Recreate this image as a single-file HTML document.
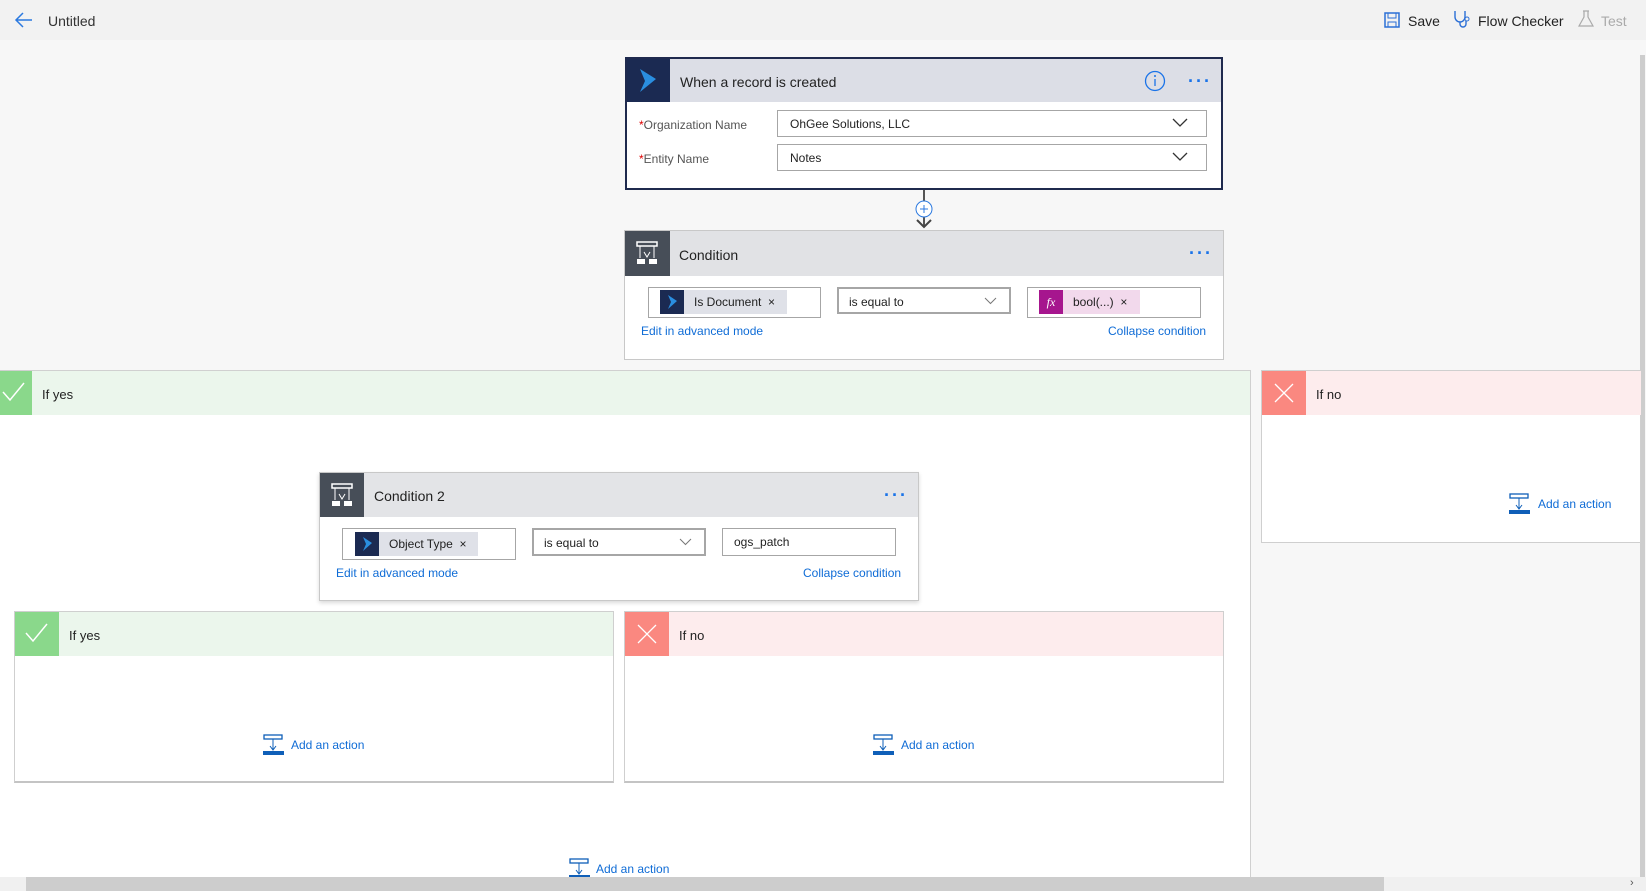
<!DOCTYPE html>
<html><head><meta charset="utf-8"><style>
*{box-sizing:border-box;margin:0;padding:0}
body{width:1646px;height:891px;overflow:hidden;background:#f7f7f7;font-family:"Liberation Sans",sans-serif;color:#222;position:relative}
.a{position:absolute}
.t{font-size:13px;white-space:nowrap}
.link{color:#0f6cd6;font-size:12px;white-space:nowrap}
.inp{position:absolute;background:#fff;border:1px solid #a6a6a6}
.chip{position:absolute;background:#dfe1e8;height:24px;font-size:12px;line-height:24px;padding-left:34px;white-space:nowrap}
.chip .ic{position:absolute;left:0;top:0;width:24px;height:24px;background:#1b2a52}
.dots{position:absolute;color:#1a73e8;font-size:18px;letter-spacing:2px;font-weight:bold}
</style></head><body>
<div class="a" style="left:0;top:0;width:1646px;height:40px;background:#f2f2f2"></div>
<svg class="a" style="left:14px;top:11px" width="20" height="18"><path d="M18 9H3M9 2L2 9l7 7" stroke="#2b79e0" stroke-width="1.5" fill="none"/></svg>
<div class="a t" style="left:48px;top:13px;font-size:14px;color:#333">Untitled</div>
<svg class="a" style="left:1384px;top:12px" width="16" height="16"><rect x="1" y="1" width="14" height="14" fill="none" stroke="#2b6fd6" stroke-width="1.5"/><rect x="4" y="1" width="8" height="5" fill="none" stroke="#2b6fd6"/><rect x="4" y="10" width="8" height="5" fill="none" stroke="#2b6fd6"/></svg>
<div class="a t" style="left:1408px;top:13px;font-size:14px">Save</div>
<svg class="a" style="left:1453px;top:10px" width="18" height="18"><path d="M2 1v6a5 5 0 0 0 10 0V1M7 12v2a3 3 0 0 0 6 0v-3" stroke="#2b6fd6" stroke-width="1.4" fill="none"/><circle cx="14" cy="9" r="2" stroke="#2b6fd6" fill="none"/></svg>
<div class="a t" style="left:1478px;top:13px;font-size:14px">Flow Checker</div>
<svg class="a" style="left:1578px;top:10px" width="16" height="18"><path d="M5 1h6M6 1v6L1 16h14L10 7V1" stroke="#aaa" stroke-width="1.2" fill="none"/></svg>
<div class="a t" style="left:1601px;top:13px;font-size:14px;color:#aaa">Test</div>
<div class="a" style="left:1640px;top:55px;width:5px;height:822px;background:#cdcdcd"></div>

<div class="a" style="left:625px;top:57px;width:598px;height:133px;background:#fff;border:2px solid #1f2a4e"></div>
<div class="a" style="left:627px;top:59px;width:594px;height:43px;background:#dcdee6"></div>
<div class="a" style="left:627px;top:59px;width:43px;height:43px;background:#1b2a52"></div>
<svg class="a" style="left:638px;top:68px" width="20" height="26"><path d="M2 1l16 10-16 13 5-11z" fill="#2a8ee0"/></svg>
<div class="a t" style="left:680px;top:74px;font-size:14px">When a record is created</div>
<svg class="a" style="left:1144px;top:70px" width="22" height="22"><circle cx="11" cy="11" r="9.5" stroke="#1a73e8" stroke-width="1.3" fill="none"/><path d="M11 9v7" stroke="#1a73e8" stroke-width="1.3"/><circle cx="11" cy="6" r="1" fill="#1a73e8"/></svg>
<div class="dots" style="left:1188px;top:71px">···</div>
<div class="a t" style="left:639px;top:118px;font-size:12px;color:#555"><span style="color:#d00">*</span>Organization Name</div>
<div class="a t" style="left:639px;top:152px;font-size:12px;color:#555"><span style="color:#d00">*</span>Entity Name</div>
<div class="inp" style="left:777px;top:110px;width:430px;height:27px"><span class="a t" style="left:12px;top:6px;font-size:12px">OhGee Solutions, LLC</span><svg class="a" style="right:18px;top:7px" width="16" height="10"><path d="M1 1l7 7 7-7" stroke="#333" stroke-width="1.3" fill="none"/></svg></div>
<div class="inp" style="left:777px;top:144px;width:430px;height:27px"><span class="a t" style="left:12px;top:6px;font-size:12px">Notes</span><svg class="a" style="right:18px;top:7px" width="16" height="10"><path d="M1 1l7 7 7-7" stroke="#333" stroke-width="1.3" fill="none"/></svg></div>
<div class="a" style="left:923px;top:190px;width:2px;height:36px;background:#555"></div>
<svg class="a" style="left:913px;top:199px" width="22" height="30"><circle cx="11" cy="10" r="8" fill="#fff" stroke="#2b79e0"/><path d="M11 6v8M7 10h8" stroke="#2b79e0"/><path d="M4 21l7 7 7-7" stroke="#444" stroke-width="2" fill="none"/></svg>

<div class="a" style="left:624px;top:230px;width:600px;height:130px;background:#fff;border:1px solid #c8c8c8"></div>
<div class="a" style="left:625px;top:231px;width:598px;height:45px;background:#e1e2e5"></div>
<div class="a" style="left:625px;top:231px;width:45px;height:45px;background:#474e58"></div>
<svg class="a" style="left:636px;top:241px" width="24" height="24"><rect x="1" y="1" width="20" height="4" fill="none" stroke="#fff" stroke-width="1.5"/><path d="M4 5v12M18 5v12M8 11l3 5 3-5" stroke="#fff" fill="none"/><rect x="1" y="18" width="8" height="5" fill="#fff"/><rect x="13" y="18" width="8" height="5" fill="#fff"/></svg>
<div class="a t" style="left:679px;top:247px;font-size:14px">Condition</div>
<div class="dots" style="left:1189px;top:243px">···</div>
<div class="inp" style="left:648px;top:287px;width:173px;height:31px"><div class="chip" style="left:11px;top:2px;width:127px"><div class="ic"><svg width="24" height="24"><path d="M8 5l9 6-9 8 3-7z" fill="#2a8ee0"/></svg></div>Is Document&nbsp; ×</div></div>
<div class="inp" style="left:837px;top:287px;width:174px;height:27px;border:2px solid #a6a6a6"><span class="a t" style="left:10px;top:6px;font-size:12px">is equal to</span><svg class="a" style="right:12px;top:8px" width="13" height="8"><path d="M1 1l5.5 5.5L12 1" stroke="#777" fill="none"/></svg></div>
<div class="inp" style="left:1027px;top:287px;width:174px;height:31px"><div class="chip" style="left:11px;top:2px;width:101px;background:#f2d9ec"><div class="ic" style="background:#a6168e;color:#fff;font-family:'Liberation Serif',serif;font-style:italic;text-align:center;line-height:24px">fx</div>bool(...)&nbsp; ×</div></div>
<div class="a link" style="left:641px;top:324px">Edit in advanced mode</div>
<div class="a link" style="left:1108px;top:324px">Collapse condition</div>

<div class="a" style="left:0;top:370px;width:1251px;height:507px;background:#fff;border-right:1px solid #d0d0d0;border-top:1px solid #d0d0d0"></div>
<div class="a" style="left:0;top:371px;width:1250px;height:44px;background:#ebf6ec"></div>
<div class="a" style="left:0;top:371px;width:32px;height:44px;background:#8ad88b"></div>
<svg class="a" style="left:2px;top:382px" width="24" height="20"><path d="M1 10l7 8L22 1" stroke="#fff" stroke-width="1.5" fill="none"/></svg>
<div class="a t" style="left:42px;top:387px">If yes</div>

<div class="a" style="left:1261px;top:370px;width:380px;height:173px;background:#fff;border:1px solid #cfcfcf"></div>
<div class="a" style="left:1262px;top:371px;width:379px;height:44px;background:#fdeced"></div>
<div class="a" style="left:1262px;top:371px;width:44px;height:44px;background:#fa8880"></div>
<svg class="a" style="left:1273px;top:382px" width="22" height="22"><path d="M2 2l18 18M20 2L2 20" stroke="#fff" stroke-width="1.3"/></svg>
<div class="a t" style="left:1316px;top:387px">If no</div>

<div class="a" style="left:319px;top:472px;width:600px;height:129px;background:#fff;border:1px solid #c8c8c8;box-shadow:0 2px 4px rgba(0,0,0,.15)"></div>
<div class="a" style="left:320px;top:473px;width:598px;height:44px;background:#e3e4e7"></div>
<div class="a" style="left:320px;top:473px;width:44px;height:44px;background:#474e58"></div>
<svg class="a" style="left:331px;top:483px" width="24" height="24"><rect x="1" y="1" width="20" height="4" fill="none" stroke="#fff" stroke-width="1.5"/><path d="M4 5v12M18 5v12M8 11l3 5 3-5" stroke="#fff" fill="none"/><rect x="1" y="18" width="8" height="5" fill="#fff"/><rect x="13" y="18" width="8" height="5" fill="#fff"/></svg>
<div class="a t" style="left:374px;top:488px;font-size:14px">Condition 2</div>
<div class="dots" style="left:884px;top:485px">···</div>
<div class="inp" style="left:342px;top:528px;width:174px;height:32px"><div class="chip" style="left:12px;top:3px;width:123px"><div class="ic"><svg width="24" height="24"><path d="M8 5l9 6-9 8 3-7z" fill="#2a8ee0"/></svg></div>Object Type&nbsp; ×</div></div>
<div class="inp" style="left:532px;top:528px;width:174px;height:28px;border:2px solid #a6a6a6"><span class="a t" style="left:10px;top:6px;font-size:12px">is equal to</span><svg class="a" style="right:12px;top:8px" width="13" height="8"><path d="M1 1l5.5 5.5L12 1" stroke="#777" fill="none"/></svg></div>
<div class="inp" style="left:722px;top:528px;width:174px;height:28px"><span class="a t" style="left:11px;top:6px;font-size:12px">ogs_patch</span></div>
<div class="a link" style="left:336px;top:566px">Edit in advanced mode</div>
<div class="a link" style="left:803px;top:566px">Collapse condition</div>

<div class="a" style="left:14px;top:611px;width:600px;height:172px;background:#fff;border:1px solid #cfcfcf;border-bottom:2px solid #c4c4c4"></div>
<div class="a" style="left:15px;top:612px;width:598px;height:44px;background:#ebf6ec"></div>
<div class="a" style="left:15px;top:612px;width:44px;height:44px;background:#8ad88b"></div>
<svg class="a" style="left:25px;top:623px" width="24" height="20"><path d="M1 10l7 8L22 1" stroke="#fff" stroke-width="1.5" fill="none"/></svg>
<div class="a t" style="left:69px;top:628px">If yes</div>
<div class="a" style="left:624px;top:611px;width:600px;height:172px;background:#fff;border:1px solid #cfcfcf;border-bottom:2px solid #c4c4c4"></div>
<div class="a" style="left:625px;top:612px;width:598px;height:44px;background:#fdeced"></div>
<div class="a" style="left:625px;top:612px;width:44px;height:44px;background:#fa8880"></div>
<svg class="a" style="left:636px;top:623px" width="22" height="22"><path d="M2 2l18 18M20 2L2 20" stroke="#fff" stroke-width="1.3"/></svg>
<div class="a t" style="left:679px;top:628px">If no</div>

<svg class="a" style="left:263px;top:734px" width="21" height="21"><rect x="1" y="1" width="18" height="4" fill="none" stroke="#0f5fb8" stroke-width="1.3"/><path d="M10 5v11M7 12l3 4 3-4" stroke="#0f5fb8" fill="none"/><rect x="0" y="17" width="21" height="4" fill="#0f5fb8"/></svg>
<div class="a link" style="left:291px;top:738px">Add an action</div>
<svg class="a" style="left:873px;top:734px" width="21" height="21"><rect x="1" y="1" width="18" height="4" fill="none" stroke="#0f5fb8" stroke-width="1.3"/><path d="M10 5v11M7 12l3 4 3-4" stroke="#0f5fb8" fill="none"/><rect x="0" y="17" width="21" height="4" fill="#0f5fb8"/></svg>
<div class="a link" style="left:901px;top:738px">Add an action</div>
<svg class="a" style="left:1509px;top:493px" width="21" height="21"><rect x="1" y="1" width="18" height="4" fill="none" stroke="#0f5fb8" stroke-width="1.3"/><path d="M10 5v11M7 12l3 4 3-4" stroke="#0f5fb8" fill="none"/><rect x="0" y="17" width="21" height="4" fill="#0f5fb8"/></svg>
<div class="a link" style="left:1538px;top:497px">Add an action</div>
<svg class="a" style="left:569px;top:858px" width="21" height="21"><rect x="1" y="1" width="18" height="4" fill="none" stroke="#0f5fb8" stroke-width="1.3"/><path d="M10 5v11M7 12l3 4 3-4" stroke="#0f5fb8" fill="none"/><rect x="0" y="17" width="21" height="4" fill="#0f5fb8"/></svg>
<div class="a link" style="left:596px;top:862px">Add an action</div>

<div class="a" style="left:0;top:877px;width:1646px;height:14px;background:#f0f0f0"></div>
<div class="a" style="left:26px;top:877px;width:1358px;height:14px;background:#cdcdcd"></div>
<div class="a t" style="left:1630px;top:877px;font-size:11px;color:#555">›</div>
</body></html>
